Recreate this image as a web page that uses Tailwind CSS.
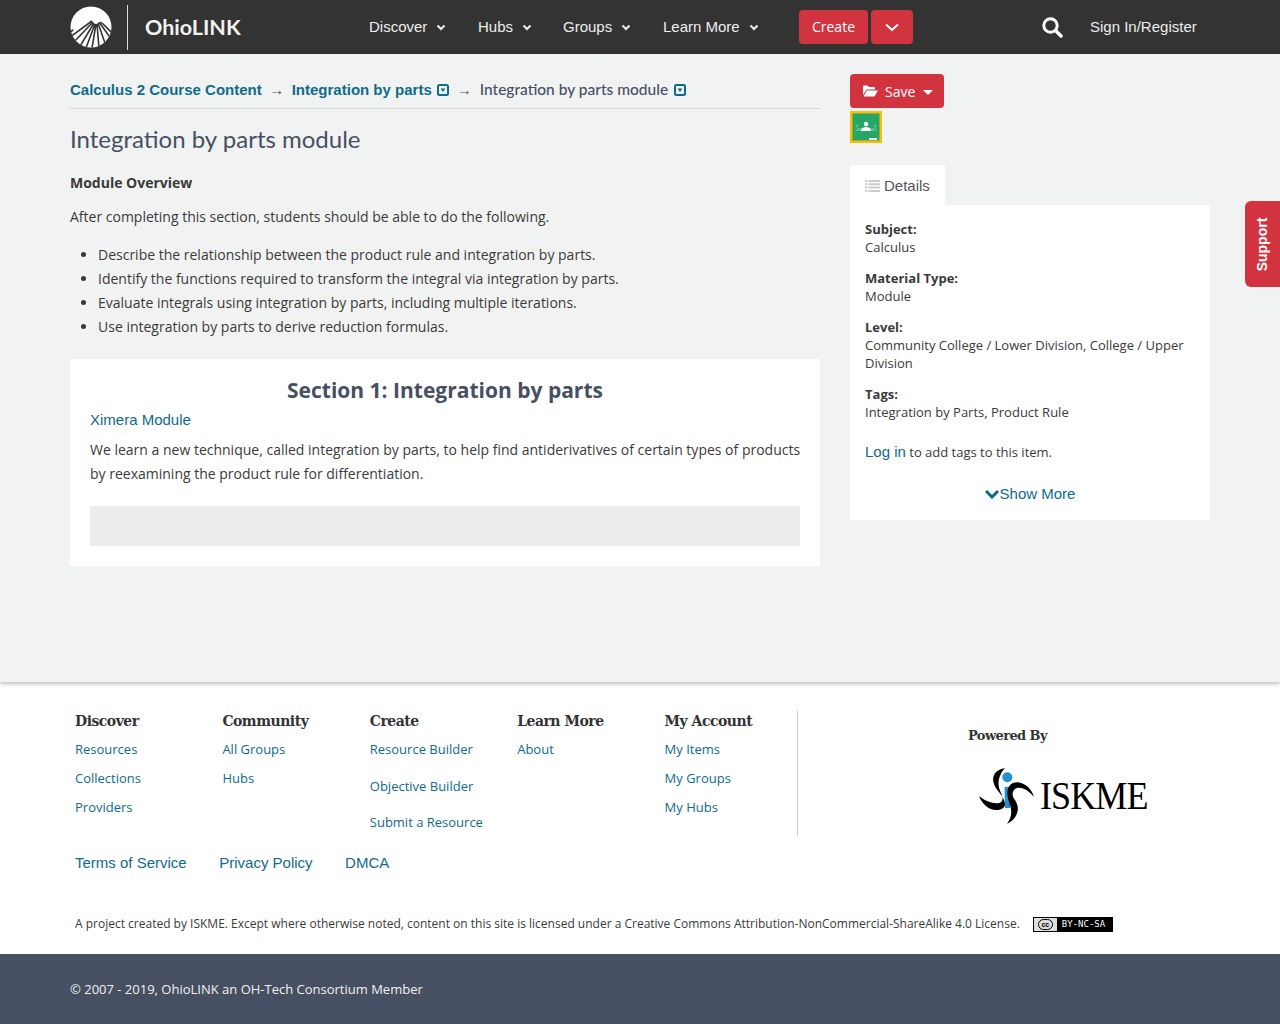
<!doctype html>
<html lang="en"><head><meta charset="utf-8"><title>Integration by parts module</title>
<script src="https://cdn.jsdelivr.net/npm/@tailwindcss/browser@4"></script></head>
<body class="bg-[#f1f3f2] font-['Open_Sans',sans-serif] text-[14px] text-[#3a3a3a]">
<header class="h-[54px] bg-[#333] flex items-center pl-[70px] text-[15px] font-['Liberation_Sans',sans-serif] text-[#eee]">
  <div class="w-[299px] flex items-center">
    <svg width="42" height="42" viewBox="0 0 42 42" class="shrink-0"><defs><clipPath id="c"><circle cx="21" cy="21" r="20.5"/></clipPath></defs><circle cx="21" cy="21" r="20.5" fill="#fff"/><g clip-path="url(#c)" stroke="#333" stroke-width="1.6" fill="none"><path d="M21 13 L0 26M22 15 L0 31M23 16 L3 37M24 17 L9 42M25 18 L16 42M26 18 L22 42M27 18 L29 42M28 17 L36 40M29 16 L42 34M30 15 L42 27"/></g><path d="M3 22 L21 10 L35 17 L21 14 L4 27Z" fill="#fff"/></svg>
    <div class="w-px h-[45px] bg-[#ddd] ml-[15px]"></div>
    <span class="ml-[17px] text-[21.500px] font-bold font-['Lato',sans-serif] text-[#f1f1f1]">OhioLINK</span>
  </div>
  <nav class="flex items-center">
    <a class="flex items-center w-[109px]">Discover<svg class="ml-[9px]" width="10" height="10" viewBox="0 0 10 10" fill="none" stroke="#eee" stroke-width="2"><path d="M1.500 3.500 5 7l3.500-3.500"/></svg></a>
    <a class="flex items-center w-[85px]">Hubs<svg class="ml-[9px]" width="10" height="10" viewBox="0 0 10 10" fill="none" stroke="#eee" stroke-width="2"><path d="M1.500 3.500 5 7l3.500-3.500"/></svg></a>
    <a class="flex items-center w-[100px]">Groups<svg class="ml-[9px]" width="10" height="10" viewBox="0 0 10 10" fill="none" stroke="#eee" stroke-width="2"><path d="M1.500 3.500 5 7l3.500-3.500"/></svg></a>
    <a class="flex items-center w-[136px]">Learn More<svg class="ml-[9px]" width="10" height="10" viewBox="0 0 10 10" fill="none" stroke="#eee" stroke-width="2"><path d="M1.500 3.500 5 7l3.500-3.500"/></svg></a>
  </nav>
  <div class="flex gap-[3px] font-['Open_Sans',sans-serif] text-[14px]">
    <span class="h-[34px] w-[69px] pb-[2px] rounded-[4px] bg-[#d1333f] text-white flex items-center justify-center">Create</span>
    <span class="h-[34px] w-[42px] rounded-[4px] bg-[#d1333f] flex items-center justify-center"><svg width="14" height="9" viewBox="0 0 14 9" fill="none" stroke="#fff" stroke-width="2"><path d="M1 1.500 7 7l6-5.500"/></svg></span>
  </div>
  <svg class="ml-[129px]" width="21" height="21" viewBox="0 0 21 21" fill="none" stroke="#fff"><circle cx="8.500" cy="8.500" r="6.700" stroke-width="3"/><path d="M13.500 13.500 19 19" stroke-width="3.500" stroke-linecap="round"/></svg>
  <a class="ml-[27px]">Sign In/Register</a>
</header>

<main class="relative z-10 h-[628px] bg-[#f1f3f2] shadow-[0_2px_4px_rgba(0,0,0,0.25)] pl-[70px] flex items-start">
  <section class="w-[750px]">
    <div class="h-[55px] pt-[18px] border-b border-[#d5d7d6] flex items-center text-[15px] font-['Liberation_Sans',sans-serif] leading-[20px]">
      <a class="font-bold text-[#0f6b8c]">Calculus 2 Course Content</a>
      <span class="text-[#555] mx-[7.500px]">→</span>
      <a class="font-bold text-[#0f6b8c]">Integration by parts</a>
      <svg class="ml-[5px]" width="12" height="12" viewBox="0 0 12 12"><rect x="1" y="1" width="10" height="10" rx="1.500" fill="none" stroke="#0f6b8c" stroke-width="2"/><path d="M3.500 4.500h5L6 8z" fill="#0f6b8c"/></svg>
      <span class="text-[#555] mx-[8px]">→</span>
      <span class="text-[#474f63] text-[15.500px] font-['Lato',sans-serif] font-medium pb-[2px]">Integration by parts module</span>
      <svg class="ml-[5.500px]" width="12" height="12" viewBox="0 0 12 12"><rect x="1" y="1" width="10" height="10" rx="1.500" fill="none" stroke="#0f6b8c" stroke-width="2"/><path d="M3.500 4.500h5L6 8z" fill="#0f6b8c"/></svg>
    </div>
    <h1 class="mt-[15px] text-[24px] leading-[30px] text-[#474f63] font-['Lato',sans-serif]">Integration by parts module</h1>
    <p class="mt-[17px] font-bold leading-[24px]">Module Overview</p>
    <p class="mt-[10px] leading-[24px]">After completing this section, students should be able to do the following.</p>
    <ul class="mt-[14px] ml-[28px] list-disc leading-[24px]">
      <li>Describe the relationship between the product rule and integration by parts.</li>
      <li>Identify the functions required to transform the integral via integration by parts.</li>
      <li>Evaluate integrals using integration by parts, including multiple iterations.</li>
      <li>Use integration by parts to derive reduction formulas.</li>
    </ul>
    <div class="mt-[20px] h-[207px] bg-white px-[20px] pt-[16px]">
      <h2 class="text-center text-[21px] leading-[30px] font-bold text-[#474f63]">Section 1: Integration by parts</h2>
      <a class="block mt-[5px] text-[15px] leading-[20px] font-['Liberation_Sans',sans-serif] text-[#0f6b8c]">Ximera Module</a>
      <p class="mt-[8px] -mr-[3px] leading-[24px]">We learn a new technique, called integration by parts, to help find antiderivatives of certain types of products by reexamining the product rule for differentiation.</p>
      <div class="mt-[20px] h-[40px] bg-[#ececec]"></div>
    </div>
  </section>
  <aside class="ml-[30px] w-[360px] pt-[20px]">
    <div class="h-[34px] w-[94px] rounded-[4px] bg-[#d1333f] text-white flex items-center pl-[13px]">
      <svg width="15" height="12" viewBox="0 0 15 12" fill="#fff"><path d="M0 1.500A1 1 0 0 1 1 .5h3.500l1.500 1.500h5a1 1 0 0 1 1 1V4.500H3.500L0 10z"/><path d="M3.800 5.500H15L11.500 11.500H.5z"/></svg>
      <span class="ml-[7px]">Save</span>
      <span class="ml-[8px] mt-[2px] w-0 h-0 border-x-[5px] border-x-transparent border-t-[5px] border-t-white"></span>
    </div>
    <svg class="block mt-[3px]" width="32" height="32" viewBox="0 0 32 32"><rect width="32" height="32" fill="#fbbc04"/><rect x="2.500" y="2.500" width="27" height="27" fill="#25a667"/><circle cx="7" cy="15" r="1.500" fill="#57bb8a"/><circle cx="25" cy="15" r="1.500" fill="#57bb8a"/><path d="M5 20c0-3 4-3 5-3h12c1 0 5 0 5 3z" fill="#57bb8a"/><circle cx="16" cy="13" r="2.200" fill="#fff"/><path d="M11 20c0-3 3-4 5-4s5 1 5 4z" fill="#fff"/><rect x="19" y="27" width="8" height="2" fill="#f1f1f1"/></svg>
    <div class="mt-[22px] w-[95px] h-[40px] pt-[2px] bg-white flex items-center pl-[15px] text-[15px] font-['Liberation_Sans',sans-serif] text-[#555]">
      <svg width="15" height="12" viewBox="0 0 15 12" fill="#ccc"><path d="M0 0h2.500v2H0zM3.500 0H15v2H3.500zM0 3.300h2.500v2H0zM3.500 3.300H15v2H3.500zM0 6.600h2.500v2H0zM3.500 6.600H15v2H3.500zM0 9.900h2.500v2H0zM3.500 9.900H15v2H3.500z"/></svg>
      <span class="ml-[4px]">Details</span>
    </div>
    <div class="h-[315px] bg-white px-[15px] pt-[15px] text-[13px] leading-[18px]">
      <p class="font-bold">Subject:</p><p>Calculus</p>
      <p class="font-bold mt-[13px]">Material Type:</p><p>Module</p>
      <p class="font-bold mt-[13px]">Level:</p><p>Community College / Lower Division, College / Upper Division</p>
      <p class="font-bold mt-[13px]">Tags:</p><p>Integration by Parts, Product Rule</p>
      <p class="mt-[21px] leading-[20px]"><a class="text-[15px] font-['Liberation_Sans',sans-serif] text-[#0f6b8c]">Log in</a> to add tags to this item.</p>
      <a class="mt-[22px] flex items-center justify-center text-[15px] leading-[20px] font-['Liberation_Sans',sans-serif] text-[#0f6b8c]"><svg width="15" height="10" viewBox="0 0 15 10" fill="none" stroke="#0f6b8c" stroke-width="3"><path d="M1 2 7 8l6-6"/></svg>Show More</a>
    </div>
  </aside>
</main>

<a class="absolute z-20 right-0 top-[201px] w-[35px] h-[86px] pl-[1px] rounded-l-[6px] bg-[#d1333f] flex items-center justify-center"><span class="block -rotate-90 whitespace-nowrap text-white font-bold text-[14px] font-['Liberation_Sans',sans-serif]">Support</span></a>

<footer class="h-[272px] bg-white relative pl-[75px] pt-[29px]">
  <div class="flex items-start">
    <div class="w-[723px] h-[125px] border-r border-[#ccc] flex text-[13px] text-[#0f6b8c]">
      <div class="w-[147.400px]">
        <h3 class="font-['DejaVu_Serif',serif] font-bold text-[14px] text-[#333] leading-[20px] tracking-[-0.5px]">Discover</h3>
        <a class="block mt-[8px] leading-[20px]">Resources</a><a class="block mt-[9px] leading-[20px]">Collections</a><a class="block mt-[9px] leading-[20px]">Providers</a>
      </div>
      <div class="w-[147.400px]">
        <h3 class="font-['DejaVu_Serif',serif] font-bold text-[14px] text-[#333] leading-[20px] tracking-[-0.5px]">Community</h3>
        <a class="block mt-[8px] leading-[20px]">All Groups</a><a class="block mt-[9px] leading-[20px]">Hubs</a>
      </div>
      <div class="w-[147.400px]">
        <h3 class="font-['DejaVu_Serif',serif] font-bold text-[14px] text-[#333] leading-[20px] tracking-[-0.5px]">Create</h3>
        <a class="block mt-[8px] leading-[20px]">Resource Builder</a><a class="block mt-[17px] leading-[20px]">Objective Builder</a><a class="block mt-[16px] leading-[20px]">Submit a Resource</a>
      </div>
      <div class="w-[147.400px]">
        <h3 class="font-['DejaVu_Serif',serif] font-bold text-[14px] text-[#333] leading-[20px] tracking-[-0.5px]">Learn More</h3>
        <a class="block mt-[8px] leading-[20px]">About</a>
      </div>
      <div>
        <h3 class="font-['DejaVu_Serif',serif] font-bold text-[14px] text-[#333] leading-[20px] tracking-[-0.5px]">My Account</h3>
        <a class="block mt-[8px] leading-[20px]">My Items</a><a class="block mt-[9px] leading-[20px]">My Groups</a><a class="block mt-[9px] leading-[20px]">My Hubs</a>
      </div>
    </div>
    <div class="ml-[170px] pt-[15px]">
      <h3 class="font-['DejaVu_Serif',serif] font-bold text-[13px] text-[#333] leading-[20px] tracking-[-0.6px]">Powered By</h3>
      <div class="mt-[21px] ml-[11px] flex items-center">
        <svg class="shrink-0" width="56" height="58" viewBox="0 0 56 58"><circle cx="28.300" cy="10.300" r="5" fill="#2391d0"/><path d="M25.500 20h6l-.5 21h-5z" fill="#2391d0"/><path d="M34 16C40 13 52 18 55 30C50 24 44 20 38 21C32 23 33 30 36 33C42 42 38 52 28 57C33 50 33 44 31 38C28 30 26 20 34 16Z" fill="#000"/><path d="M26 1.300C17 2 12 9 15 17C17 24 25 28 26 37C26 41 22 43 17 43C10 43 3 37 0 29C6 34 14 37 20 36C24 35 24 32 23 28C20 22 18 16 21 9C22 6 24 3 26 1.300Z" fill="#000"/></svg>
        <span class="ml-[5px] font-['Liberation_Serif',serif] text-[40px] leading-none text-black origin-left scale-x-[0.9] tracking-[-1px]">ISKME</span>
      </div>
    </div>
  </div>
  <div class="flex gap-[32.500px] mt-[17px] text-[15px] leading-[20px] font-['Liberation_Sans',sans-serif] text-[#0f6b8c]">
    <a>Terms of Service</a><a>Privacy Policy</a><a>DMCA</a>
  </div>
  <div class="mt-[41px] flex items-center text-[12px] leading-[20px]">
    <span>A project created by ISKME. Except where otherwise noted, content on this site is licensed under a Creative Commons Attribution-NonCommercial-ShareAlike 4.0 License.</span>
    <span class="ml-[13px] w-[80px] h-[15px] bg-black border border-black flex items-center text-white"><span class="w-[23px] h-full bg-[#ddd] flex items-center justify-center"><span class="w-[15px] h-[11px] rounded-full border border-black text-[7px] leading-none font-bold text-black font-['Liberation_Sans',sans-serif] flex items-center justify-center">cc</span></span><span class="ml-[5px] text-[9px] leading-none font-['DejaVu_Sans_Mono',monospace]">BY-NC-SA</span></span>
  </div>
</footer>
<div class="h-[70px] pt-[2px] bg-[#474f63] pl-[70px] flex items-center text-[13px] text-[#f1f1f1]">© 2007 - 2019, OhioLINK an OH-Tech Consortium Member</div>
</body></html>
